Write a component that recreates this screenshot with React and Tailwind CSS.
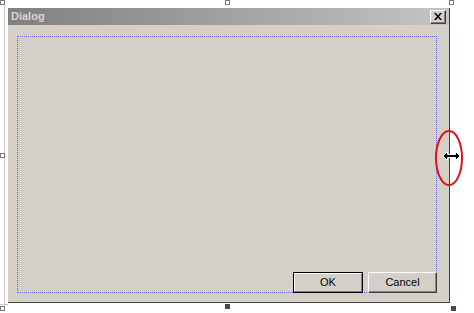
export default function App() {
  const font = { fontFamily: '"Liberation Sans", Arial, sans-serif' };
  return (
    <div className="relative w-[474px] h-[313px] bg-white overflow-hidden pl-[8px] pt-[8px]" style={font}>
      {/* selection frame lines */}
      <div className="absolute left-[4px] top-[5px] w-px h-[300px] bg-[#c8c8c8]" />
      <div className="absolute left-[0px] top-[304px] w-[8px] h-px bg-[#c8c8c8]" />

      {/* dialog */}
      <div className="w-[442px] h-[295px] flex flex-col bg-[#d4d0c8] border-r border-b border-[#404040]">
        <div className="h-[17px] flex items-center justify-between bg-gradient-to-r from-[#808080] to-[#c4c4c4] pl-[3px] pr-[3px]">
          <span className="text-[11px] font-bold text-[#d8d4cc] leading-none">Dialog</span>
          <div className="w-[16px] h-[14px] flex items-center justify-center bg-[#d4d0c8] border-t border-l border-white border-r border-b border-r-[#404040] border-b-[#404040] shadow-[inset_-1px_-1px_0_#808080]">
            <svg width="8" height="7" viewBox="0 0 8 7">
              <path d="M0 0h2l2 2.5L6 0h2L5 3.5 8 7H6L4 4.5 2 7H0l3-3.5z" fill="#000" />
            </svg>
          </div>
        </div>
        <div className="flex-1 pt-[11px] pl-[9px] pr-[12px] pb-[9px] flex">
          <div className="flex-1 border border-dotted border-[#6a6ae0] flex flex-col justify-end items-end">
            <div className="flex gap-[5px] mb-[-1px] mr-[-1px]">
              <div className="w-[70px] h-[21px] border border-black flex">
                <div className="flex-1 flex items-center justify-center border-t border-l border-white border-r border-b border-r-[#808080] border-b-[#808080] text-[11px] text-black">
                  OK
                </div>
              </div>
              <div className="w-[69px] h-[21px] flex items-center justify-center border-t border-l border-white border-r border-b border-r-[#404040] border-b-[#404040] shadow-[inset_-1px_-1px_0_#808080] text-[11px] text-black">
                Cancel
              </div>
            </div>
          </div>
        </div>
      </div>

      {/* handles */}
      <div className="absolute left-0 top-0 w-[5px] h-[5px] bg-white border border-[#7a7a7a]" />
      <div className="absolute left-[225px] top-0 w-[5px] h-[5px] bg-white border border-[#7a7a7a]" />
      <div className="absolute left-[449px] top-0 w-[5px] h-[5px] bg-white border border-[#7a7a7a]" />
      <div className="absolute left-0 top-[153px] w-[5px] h-[5px] bg-white border border-[#7a7a7a]" />
      <div className="absolute left-0 top-[306px] w-[5px] h-[5px] bg-white border border-[#7a7a7a]" />
      <div className="absolute left-[225px] top-[304px] w-[5px] h-[5px] bg-[#3c4a5e]" />
      <div className="absolute left-[451px] top-[306px] w-[5px] h-[5px] bg-[#3c4a5e]" />

      {/* red ellipse + cursor */}
      <svg className="absolute left-[433px] top-[128px]" width="34" height="60" viewBox="0 0 34 60">
        <ellipse cx="16" cy="30" rx="13" ry="27" fill="none" stroke="#e0101a" strokeWidth="2" />
        <path d="M10 28 L14.5 23.5 L14.5 26.5 L22.5 26.5 L22.5 23.5 L27 28 L22.5 32.5 L22.5 29.5 L14.5 29.5 L14.5 32.5 Z" fill="#000" stroke="#fff" strokeWidth="1" strokeLinejoin="miter" />
      </svg>
    </div>
  );
}
